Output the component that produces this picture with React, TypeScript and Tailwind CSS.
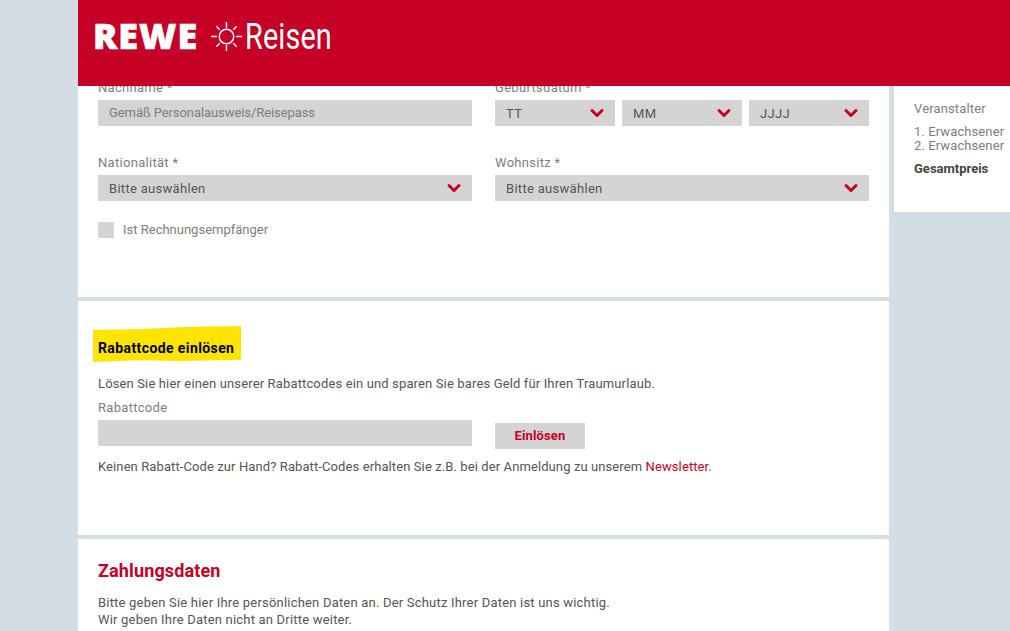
import { ChevronDown } from "lucide-react"

const font = { fontFamily: '"Roboto", "Liberation Sans", sans-serif' }

function Select({ label, className }: { label: string; className: string }) {
  return (
    <div className={`flex h-[26px] items-center justify-between bg-[#d4d4d4] pl-[11px] pr-[8px] text-[#555] ${className}`}>
      <span className="pt-[1px] tracking-[0.3px]">{label}</span>
      <ChevronDown className="h-[20px] w-[20px] text-[#c70025]" strokeWidth={3.6} />
    </div>
  )
}

function Label({ children }: { children: string }) {
  return <div className="mb-[3px] h-[20px] leading-[22px] tracking-[0.3px] text-[#7d7d7d]">{children}</div>
}

function Header() {
  return (
    <header className="absolute left-[78px] right-0 top-0 flex h-[86px] items-center bg-[#c70025] pb-[14px] pl-[15px] text-white">
      <span className="w-[118px] text-[36px] font-black leading-none tracking-[1px] [-webkit-text-stroke:0.7px_white]" style={{ fontFamily: '"Open Sans", sans-serif' }}>
        REWE
      </span>
      <svg viewBox="0 0 32 32" className="h-[31px] w-[31px]" fill="none" stroke="white" strokeWidth="1.5">
        <circle cx="16" cy="16" r="7.500" />
        <path d="M16 1v6M16 25v6M0 16h6M26 16h6M5.500 5.500l3.500 3.500M23 23l3.500 3.500M5.500 26.500l3.500-3.500M23 9l3.500-3.500" />
      </svg>
      <span className="ml-[3px] origin-left scale-x-[0.78] text-[37px] leading-none">Reisen</span>
    </header>
  )
}

export default function App() {
  return (
    <div className="relative h-[631px] overflow-hidden bg-[#d3dee4] text-[13px] tracking-[0.14px]" style={font}>
      <Header />
      <div className="flex items-start pl-[78px]">
        <main className="flex w-[811px] shrink-0 flex-col gap-[4px]">
          <section className="h-[297px] bg-white px-[20px] pt-[77px]">
            <div className="grid grid-cols-[374px_374px] gap-x-[23px] gap-y-[26px]">
              <div>
                <Label>Nachname *</Label>
                <div className="flex h-[26px] items-center bg-[#d4d4d4] pl-[11px] tracking-[-0.08px] text-[#7d7d7d]">Gemäß Personalausweis/Reisepass</div>
              </div>
              <div>
                <Label>Geburtsdatum *</Label>
                <div className="flex gap-[7px]">
                  <Select label="TT" className="w-[120px]" />
                  <Select label="MM" className="w-[120px]" />
                  <Select label="JJJJ" className="w-[120px]" />
                </div>
              </div>
              <div>
                <Label>Nationalität *</Label>
                <Select label="Bitte auswählen" className="w-full" />
              </div>
              <div>
                <Label>Wohnsitz *</Label>
                <Select label="Bitte auswählen" className="w-full" />
              </div>
            </div>
            <div className="mt-[18px] flex items-center gap-[9px] leading-[20px] text-[#7d7d7d]">
              <div className="h-[16px] w-[16px] bg-[#d4d4d4]" />
              <span className="pt-[1px] tracking-[0px]">Ist Rechnungsempfänger</span>
            </div>
          </section>

          <section className="h-[234px] bg-white px-[20px] pt-[25px]">
            <div className="-ml-[5px] h-[36px] w-[148px] bg-[#ffe400] pl-[5px] pt-[12px] [clip-path:polygon(0_11%,35%_8%,62%_3%,100%_0,100%_94%,60%_97%,30%_95%,0_100%)]">
              <h3 className="text-[14px] font-bold leading-[20px] tracking-[0.4px] text-black">Rabattcode einlösen</h3>
            </div>
            <p className="mt-[13px] leading-[18px] text-[#555]">
              Lösen Sie hier einen unserer Rabattcodes ein und sparen Sie bares Geld für Ihren Traumurlaub.
            </p>
            <div className="mt-[4px]">
              <Label>Rabattcode</Label>
            </div>
            <div className="flex items-start gap-[23px]">
              <div className="h-[26px] w-[374px] bg-[#d4d4d4]" />
              <button className="mt-[3px] h-[26px] w-[90px] bg-[#d4d4d4] font-bold text-[#c70025]">Einlösen</button>
            </div>
            <p className="mt-[9px] leading-[18px] tracking-[0.1px] text-[#555]">
              Keinen Rabatt-Code zur Hand? Rabatt-Codes erhalten Sie z.B. bei der Anmeldung zu unserem{" "}
              <a className="text-[#c70025]">Newsletter</a>.
            </p>
          </section>

          <section className="h-[200px] bg-white px-[20px] pt-[19px]">
            <h2 className="text-[18px] font-bold leading-[26px] text-[#c70025]">Zahlungsdaten</h2>
            <p className="mt-[10px] leading-[17px] tracking-[0.2px] text-[#555]">
              Bitte geben Sie hier Ihre persönlichen Daten an. Der Schutz Ihrer Daten ist uns wichtig.
              <br />
              Wir geben Ihre Daten nicht an Dritte weiter.
            </p>
          </section>
        </main>

        <aside className="ml-[5px] flex h-[212px] w-[200px] shrink-0 flex-col bg-white pl-[20px] pt-[100px] text-[#7d7d7d]">
          <div className="leading-[18px]">Veranstalter</div>
          <div className="mt-[7px] leading-[14px] tracking-[0.1px]">
            1. Erwachsener
            <br />
            2. Erwachsener
          </div>
          <div className="mt-[7px] font-bold leading-[18px] tracking-normal text-[#444]">Gesamtpreis</div>
        </aside>
      </div>
    </div>
  )
}
